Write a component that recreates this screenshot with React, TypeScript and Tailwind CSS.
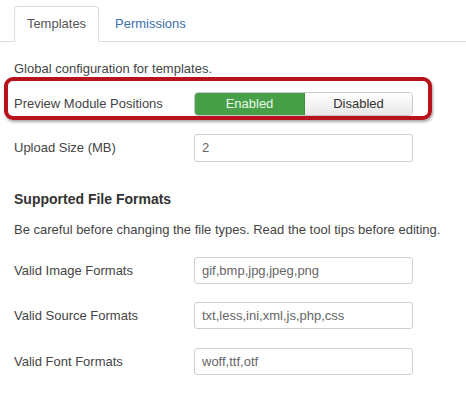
import React from "react";

const font = { fontFamily: '"Liberation Sans", Arial, sans-serif' };

function Field({ label, value, mt, h }: { label: string; value: string; mt: string; h: string }) {
  return (
    <div className={`flex items-center ${mt}`}>
      <div className="w-[180px] shrink-0 text-[13px] text-[#444]">{label}</div>
      <div className={`w-[219px] ${h} border border-[#cfcfcf] rounded-[3px] bg-white flex items-center pl-[7px] text-[13px] text-[#666]`}>
        {value}
      </div>
    </div>
  );
}

export default function App() {
  return (
    <div className="w-[466px] h-[400px] bg-white relative overflow-hidden" style={font}>
      {/* Tabs */}
      <div className="pt-[6px] flex border-b border-[#dddddd] h-[42px]">
        <div className="ml-[14px] w-[85px] h-[36px] border border-[#dddddd] border-b-white rounded-t-[4px] bg-white flex items-center justify-center text-[13px] text-[#555]">
          Templates
        </div>
        <div className="ml-[16px] h-[35px] flex items-center text-[13px] text-[#3a70ad]">Permissions</div>
      </div>

      <div className="px-[14px]">
        <div className="mt-[18px] h-[18px] leading-[18px] text-[13px] text-[#444]">Global configuration for templates.</div>

        {/* Preview row */}
        <div className="relative mt-[14px] flex items-center">
          <div className="w-[180px] shrink-0 text-[13px] text-[#444]">Preview Module Positions</div>
          <div className="flex w-[219px] h-[24px] rounded-[4px] border border-[#c8c8c8] overflow-hidden text-[13px]">
            <div className="w-[110px] bg-[#47a047] text-[#eaf6ea] flex items-center justify-center border-r border-[#3e8f3e]">
              Enabled
            </div>
            <div className="flex-1 bg-gradient-to-b from-white to-[#e8e8e8] text-[#333] flex items-center justify-center">
              Disabled
            </div>
          </div>
        </div>

        <Field label="Upload Size (MB)" value="2" mt="mt-[18px]" h="h-[28px]" />

        <div className="mt-[27px] h-[20px] leading-[20px] text-[14px] font-bold text-[#333]">Supported File Formats</div>
        <div className="mt-[12px] h-[18px] leading-[18px] text-[13px] text-[#444]">
          Be careful before changing the file types. Read the tool tips before editing.
        </div>

        <Field label="Valid Image Formats" value="gif,bmp,jpg,jpeg,png" mt="mt-[18px]" h="h-[27px]" />
        <Field label="Valid Source Formats" value="txt,less,ini,xml,js,php,css" mt="mt-[18px]" h="h-[27px]" />
        <Field label="Valid Font Formats" value="woff,ttf,otf" mt="mt-[19px]" h="h-[27px]" />
      </div>

      {/* Highlight annotation */}
      <div className="absolute left-[4px] top-[77px] w-[428px] h-[43px] border-[4px] border-[#b8121c] rounded-[9px] shadow-[1px_2px_3px_rgba(0,0,0,0.35)] pointer-events-none" />
    </div>
  );
}
